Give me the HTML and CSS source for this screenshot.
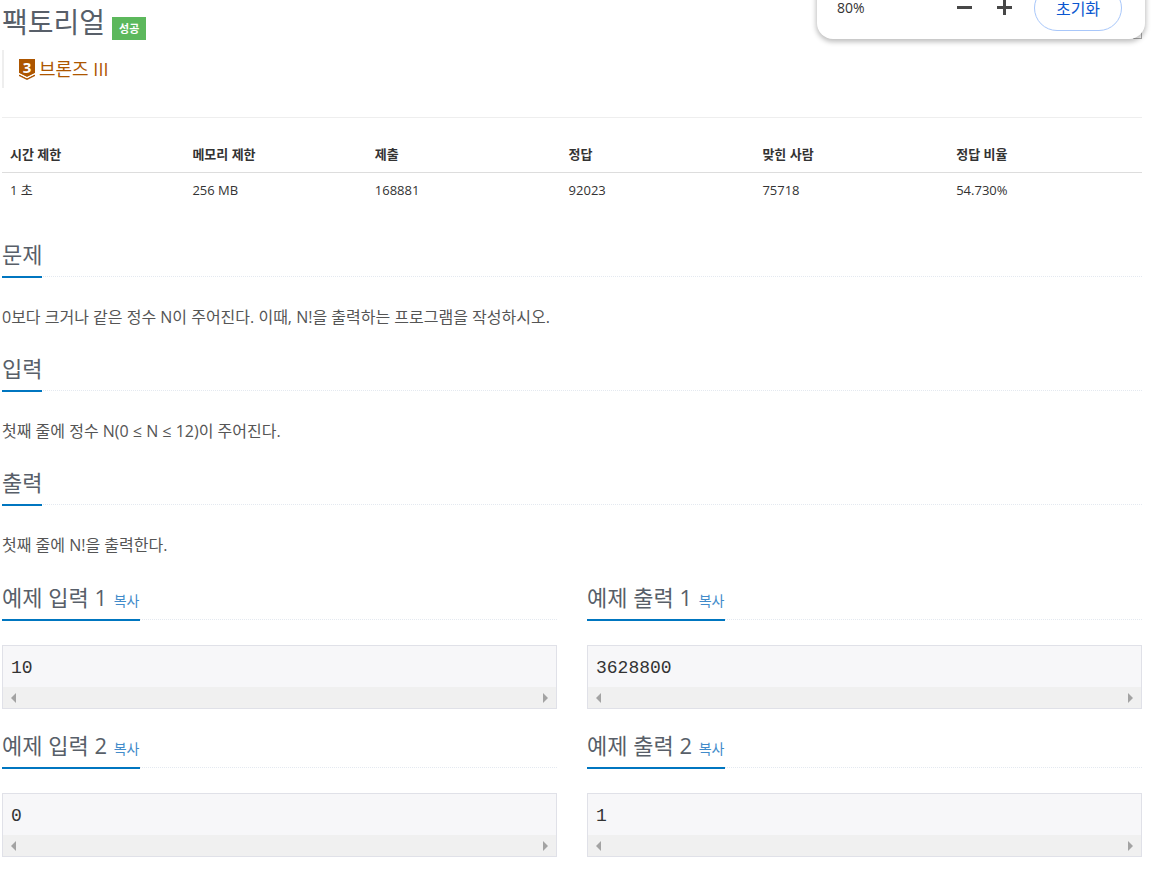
FILE: index.html
```html
<!DOCTYPE html>
<html lang="ko">
<head>
    <meta charset="UTF-8">
    <meta name="viewport" content="width=device-width, initial-scale=1">

    <title>팩토리얼</title>

    <link rel="stylesheet" href="styles.css">
</head>
<body>
    <div class="container">
        <div class="page-header">
            <h1><span>팩토리얼</span><span class="label-success">성공</span></h1>
            <blockquote class="tier">
                <svg width="16" height="22" viewBox="0 0 16 22" aria-hidden="true">
                    <path fill="#ad5600" d="M0 1h16v14l-8 4-8-4z"/>
                    <path fill="none" stroke="#ad5600" stroke-width="1.3" d="M0 17.2l8 4 8-4"/>
                    <path fill="none" stroke="#fff" stroke-width="1" d="M0 15.7l8 4 8-4"/>
                    <text class="tier-num" x="8" y="15" text-anchor="middle">3</text>
                </svg>
                <span>브론즈 III</span>
            </blockquote>
        </div>

        <table class="info">
            <thead>
                <tr>
                    <th class="w16">시간 제한</th>
                    <th class="w16">메모리 제한</th>
                    <th class="w17">제출</th>
                    <th class="w17">정답</th>
                    <th class="w17">맞힌 사람</th>
                    <th class="w17">정답 비율</th>
                </tr>
            </thead>
            <tbody>
                <tr>
                    <td>1 초</td>
                    <td>256 MB</td>
                    <td>168881</td>
                    <td>92023</td>
                    <td>75718</td>
                    <td>54.730%</td>
                </tr>
            </tbody>
        </table>

        <section>
            <div class="headline"><h2>문제</h2></div>
            <p>0보다 크거나 같은 정수 N이 주어진다. 이때, N!을 출력하는 프로그램을 작성하시오.</p>
        </section>

        <section>
            <div class="headline"><h2>입력</h2></div>
            <p>첫째 줄에 정수 N(0 ≤ N ≤ 12)이 주어진다.</p>
        </section>

        <section>
            <div class="headline"><h2>출력</h2></div>
            <p>첫째 줄에 N!을 출력한다.</p>
        </section>

        <div class="samples">
            <section>
                <div class="headline"><h2>예제 입력 1 <button type="button" class="copy">복사</button></h2></div>
                <div class="sample">
                    <pre>10</pre>
                    <div class="scroll"><i class="left"></i><i class="right"></i></div>
                </div>
            </section>
            <section>
                <div class="headline"><h2>예제 출력 1 <button type="button" class="copy">복사</button></h2></div>
                <div class="sample">
                    <pre>3628800</pre>
                    <div class="scroll"><i class="left"></i><i class="right"></i></div>
                </div>
            </section>
            <section>
                <div class="headline"><h2>예제 입력 2 <button type="button" class="copy">복사</button></h2></div>
                <div class="sample">
                    <pre>0</pre>
                    <div class="scroll"><i class="left"></i><i class="right"></i></div>
                </div>
            </section>
            <section>
                <div class="headline"><h2>예제 출력 2 <button type="button" class="copy">복사</button></h2></div>
                <div class="sample">
                    <pre>1</pre>
                    <div class="scroll"><i class="left"></i><i class="right"></i></div>
                </div>
            </section>
        </div>
    </div>

    <div class="corner"></div>
    <div class="zoom">
        <span class="zoom-value">80%</span>
        <button type="button" class="zoom-btn" aria-label="축소">
            <svg width="15" height="15" viewBox="0 0 15 15"><path fill="#474747" d="M0 6h15v3H0z"/></svg>
        </button>
        <button type="button" class="zoom-btn" aria-label="확대">
            <svg width="15" height="15" viewBox="0 0 15 15"><path fill="#474747" d="M0 6h6V0h3v6h6v3H9v6H6V9H0z"/></svg>
        </button>
        <button type="button" class="reset">초기화</button>
    </div>
</body>
</html>
```

FILE: styles.css
```css
* {
    box-sizing: border-box;
}

body {
    margin: 0;
    background: #fff;
    color: #333;
    font-family: "Open Sans", "Noto Sans CJK KR", sans-serif;
    font-size: 13px;
}

button {
    padding: 0;
    border: 0;
    background: none;
    font-family: inherit;
    cursor: pointer;
}

h1, h2, p, pre, blockquote {
    margin: 0;
    font-weight: 400;
}

.container {
    padding: 0 10px 0 2px;
}

/* title */
.page-header {
    padding-bottom: 29px;
    border-bottom: 1px solid #eee;
}

h1 {
    display: flex;
    gap: 7px;
    height: 50px;
    color: #585f69;
    font-size: 28px;
    line-height: 44px;
}

.label-success {
    align-self: flex-start;
    margin-top: 17px;
    padding: 0 7px;
    background: #5cb85c;
    color: #fff;
    font-size: 11px;
    font-weight: 600;
    line-height: 23px;
}

.tier {
    display: flex;
    align-items: center;
    gap: 4px;
    height: 38px;
    padding-left: 15px;
    border-left: 2px solid #eee;
    color: #ad5600;
    font-size: 18px;
    line-height: 36px;
}

.tier-num {
    fill: #fff;
    font-size: 15px;
    font-weight: 700;
}

/* problem info */
.info {
    width: 100%;
    margin: 19px 0 32px;
    border-collapse: collapse;
    table-layout: fixed;
    line-height: 19px;
}

.info th,
.info td {
    padding: 8px;
    text-align: left;
}

.info th {
    border-bottom: 1px solid #ddd;
    font-weight: 700;
}

.w16 {
    width: 16%;
}

.w17 {
    width: 17%;
}

/* sections */
.headline {
    display: flex;
    height: 37px;
    margin-bottom: 25px;
    border-bottom: 1px dotted #e4e9f0;
}

.headline h2 {
    height: 38px;
    border-bottom: 2px solid #0076c0;
    color: #585f69;
    font-size: 22px;
    line-height: 28px;
}

section p {
    margin-bottom: 22px;
    color: #555;
    font-size: 16px;
    line-height: 30px;
}

.copy {
    padding: 0 1px;
    color: #428bca;
    font-size: 14px;
}

/* samples */
.samples {
    display: grid;
    grid-template-columns: 1fr 1fr;
    gap: 22px 30px;
    margin-top: 23px;
}

.sample {
    border: 1px solid #e0e1e8;
    background: #f7f7f9;
}

.sample pre {
    padding: 5px 8px 2px;
    color: #333;
    font-family: "Liberation Mono", monospace;
    font-size: 18px;
    line-height: 34px;
}

.scroll {
    display: flex;
    align-items: center;
    justify-content: space-between;
    height: 21px;
    padding: 0 8px;
    background: #f0f0f0;
}

.scroll i {
    border: 5px solid transparent;
}

.scroll .left {
    border-left: 0;
    border-right-color: #a3a3a3;
}

.scroll .right {
    border-right: 0;
    border-left-color: #a3a3a3;
}

/* browser zoom bubble over the page */
.zoom {
    position: absolute;
    top: -24px;
    right: 7px;
    display: flex;
    align-items: center;
    width: 328px;
    height: 63px;
    padding: 0 23px 0 20px;
    border-radius: 0 0 16px 16px;
    background: #fff;
    box-shadow: 0 2px 5px 1px rgba(0, 0, 0, .25);
    color: #333;
    font-size: 14px;
}

.zoom-value {
    flex: 1;
}

.zoom-btn {
    display: flex;
    justify-content: center;
    width: 40px;
}

.reset {
    width: 88px;
    height: 46px;
    margin-left: 10px;
    padding-top: 3px;
    border: 1px solid #a8c7fa;
    border-radius: 23px;
    color: #0b57d0;
    font-size: 16px;
    line-height: 14px;
}

.corner {
    position: absolute;
    top: 30px;
    right: 10px;
    width: 9px;
    height: 9px;
    border: 1px solid #aaa;
}
```
